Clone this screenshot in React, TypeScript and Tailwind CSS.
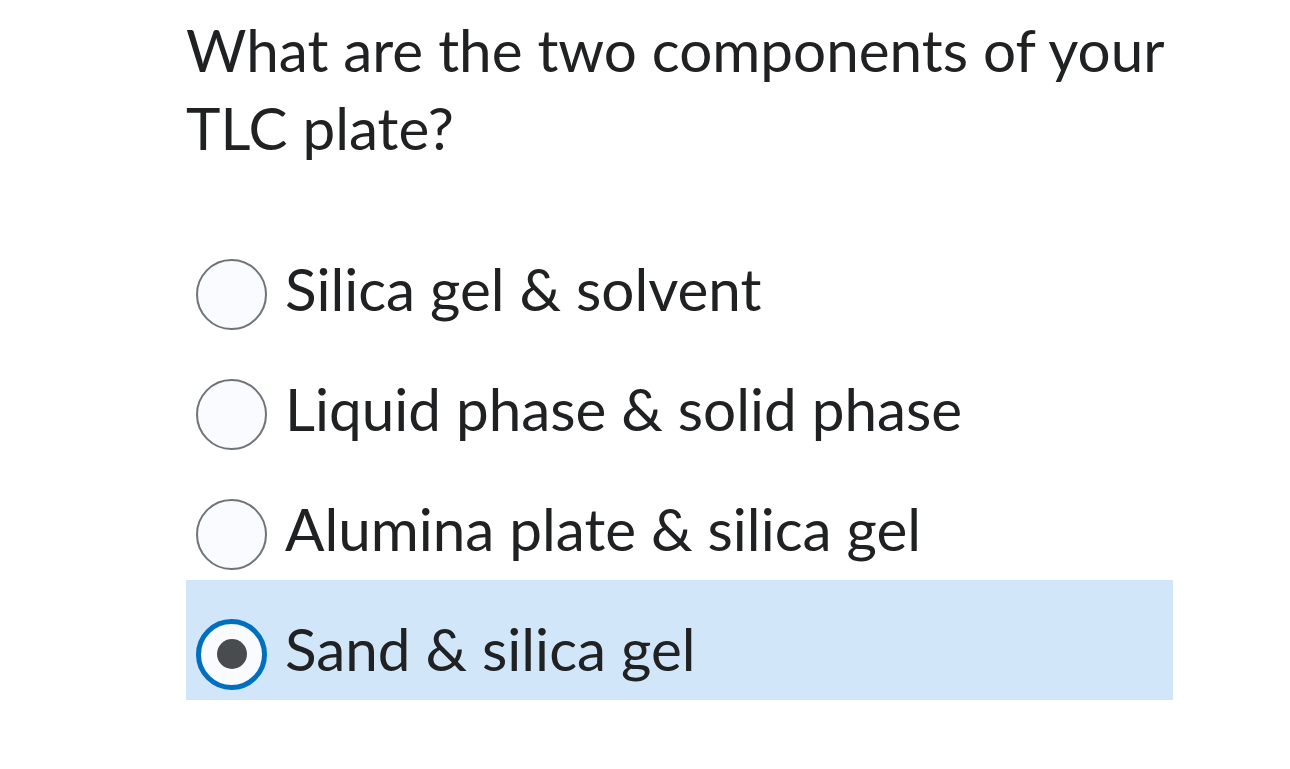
const options = [
  { label: "Silica gel & solvent", checked: false },
  { label: "Liquid phase & solid phase", checked: false },
  { label: "Alumina plate & silica gel", checked: false },
  { label: "Sand & silica gel", checked: true },
];

function Radio({ checked }: { checked: boolean }) {
  if (checked) {
    return (
      <span className="mt-[4px] flex h-[71px] w-[71px] shrink-0 items-center justify-center rounded-full border-[5px] border-[#006fbf] bg-[#f9fbff]">
        <span className="h-[30px] w-[30px] rounded-full bg-[#494c4e]" />
      </span>
    );
  }
  return <span className="mt-[4px] h-[71px] w-[71px] shrink-0 rounded-full border-2 border-[#6e7477] bg-[#f9fbff]" />;
}

export default function App() {
  return (
    <div className="min-h-[769px] w-full bg-white font-['Lato',sans-serif] text-[#202122]">
      <div className="ml-[186px] w-[987px] pt-[10px]">
        <h1 className="text-[58.4px] leading-[78.4px] font-normal">
          What are the two components of your TLC plate?
        </h1>

        <div className="mt-[53px] flex flex-col">
          {options.map((o) => (
            <label
              key={o.label}
              className={`flex items-start gap-[18px] pt-[35px] pb-[10px] pl-[10px] ${
                o.checked ? "bg-[#d2e6f9]" : ""
              }`}
            >
              <Radio checked={o.checked} />
              <span className="text-[58.4px] leading-[67px]">{o.label}</span>
            </label>
          ))}
        </div>
      </div>
    </div>
  );
}
